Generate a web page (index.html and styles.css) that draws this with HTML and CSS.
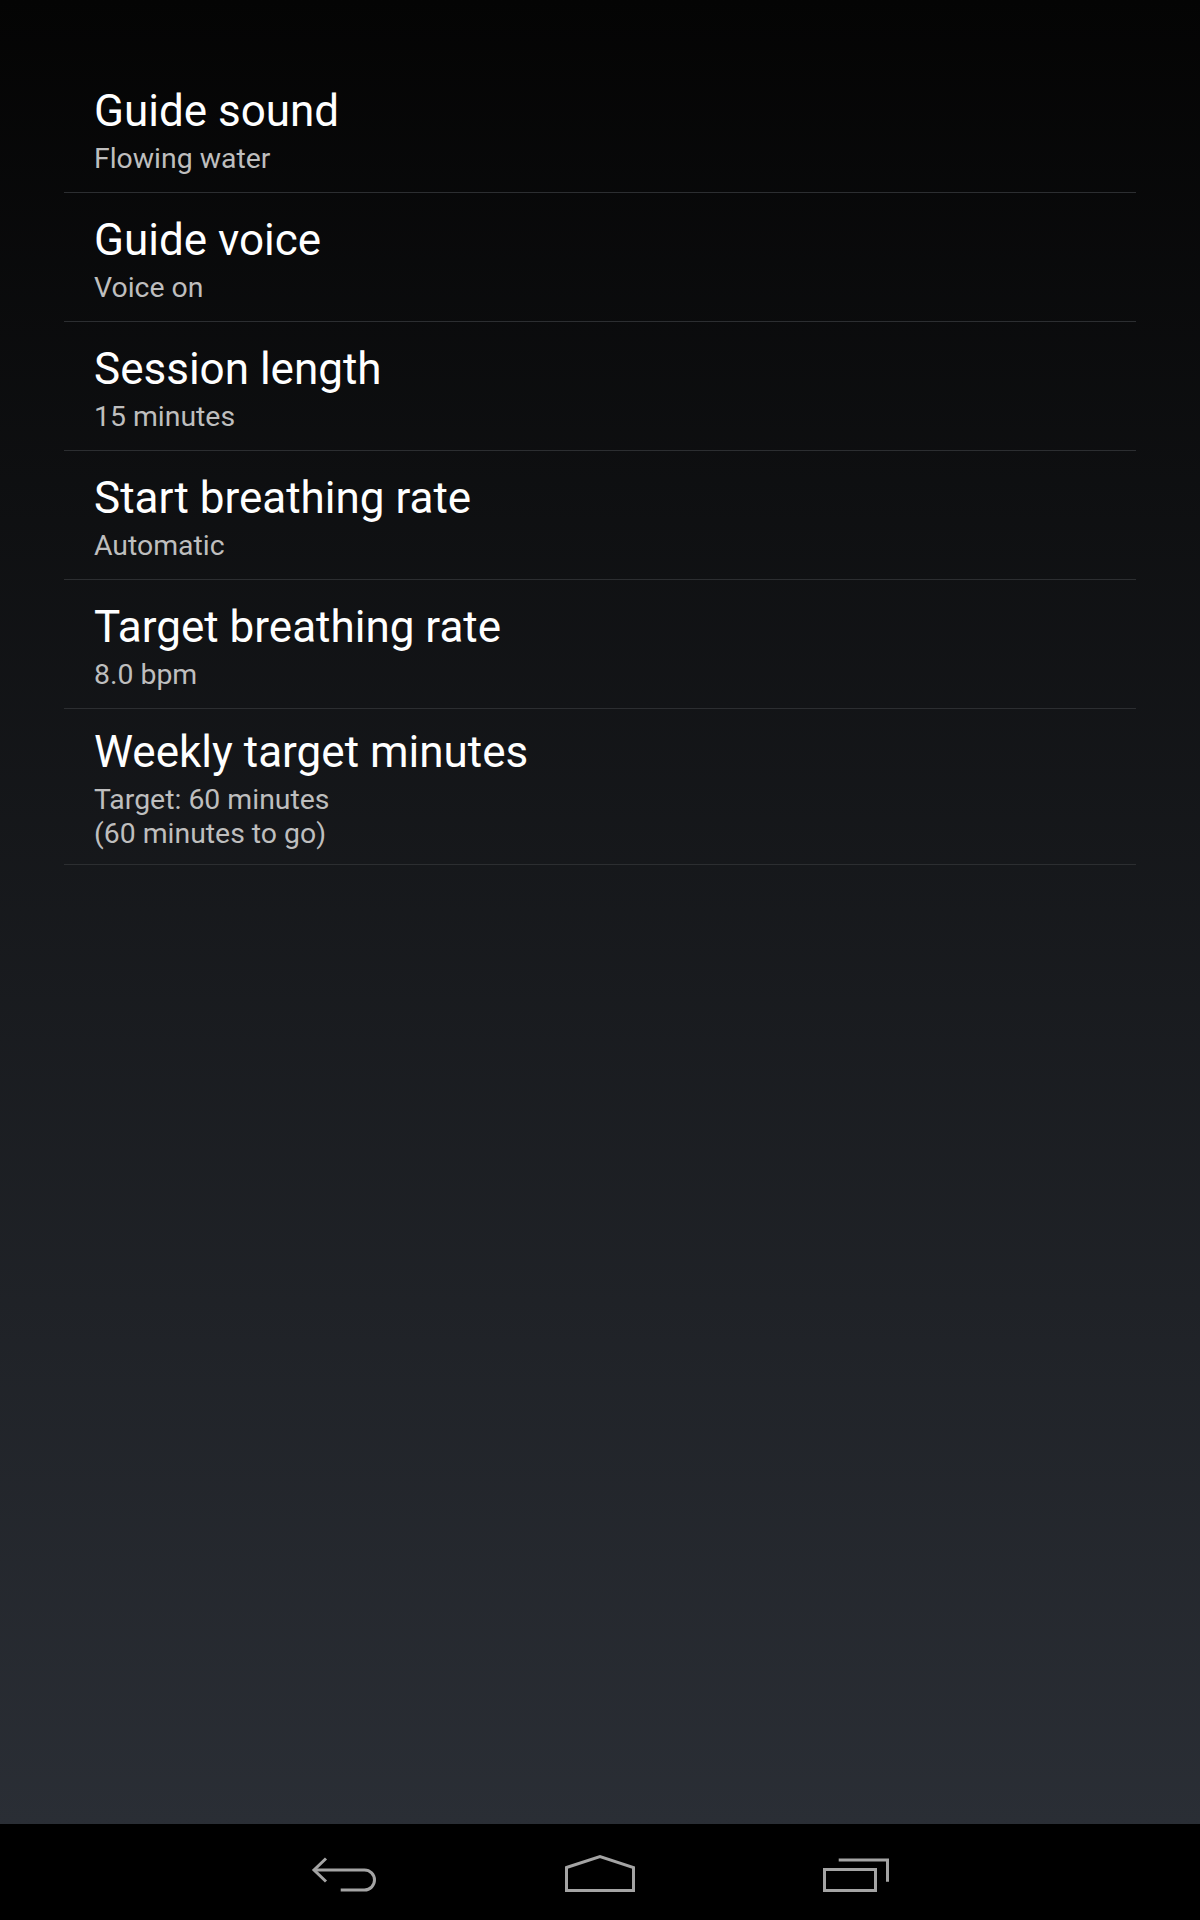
FILE: index.html
```html
<!DOCTYPE html>
<html lang="en">
<head>
<meta charset="UTF-8">
<meta name="viewport" content="width=device-width, initial-scale=1.0">
<title>Settings</title>
<link rel="stylesheet" href="styles.css">
</head>
<body>
  <div class="screen">
    <ul class="prefs">
      <li class="pref">
        <div class="pref-title">Guide sound</div>
        <div class="pref-summary">Flowing water</div>
      </li>
      <li class="pref">
        <div class="pref-title">Guide voice</div>
        <div class="pref-summary">Voice on</div>
      </li>
      <li class="pref">
        <div class="pref-title">Session length</div>
        <div class="pref-summary">15 minutes</div>
      </li>
      <li class="pref">
        <div class="pref-title">Start breathing rate</div>
        <div class="pref-summary">Automatic</div>
      </li>
      <li class="pref">
        <div class="pref-title">Target breathing rate</div>
        <div class="pref-summary">8.0 bpm</div>
      </li>
      <li class="pref">
        <div class="pref-title">Weekly target minutes</div>
        <div class="pref-summary">Target: 60 minutes<br>(60 minutes to go)</div>
      </li>
    </ul>
  </div>

  <nav class="navbar">
    <div class="nav-btn">
      <!-- back -->
      <svg width="80" height="48" viewBox="0 0 80 48">
        <path d="M22 10.5 L10 22 L22 33.5" />
        <path d="M10 22 H60.5 A10 10 0 0 1 60.5 42 H36.7" />
      </svg>
    </div>
    <div class="nav-btn">
      <!-- home -->
      <svg width="80" height="48" viewBox="0 0 80 48">
        <path d="M6.5 19.5 L40 8.5 L73.5 19.5 V42.5 H6.5 Z" />
      </svg>
    </div>
    <div class="nav-btn">
      <!-- recents -->
      <svg width="80" height="48" viewBox="0 0 80 48">
        <rect x="8.5" y="21.5" width="51" height="21" />
        <path d="M22.7 12 H71.5 V33.7" />
      </svg>
    </div>
  </nav>
</body>
</html>
```

FILE: styles.css
```css
html, body {
  margin: 0;
  padding: 0;
}
body {
  width: 1200px;
  height: 1920px;
  background-color: #000;
  font-family: Roboto, "Noto Sans", sans-serif;
  overflow: hidden;
}
.screen {
  height: 1824px;
  box-sizing: border-box;
  padding: 64px 64px 0;
  background: linear-gradient(#040404, #2a2e35);
}
.prefs {
  list-style: none;
  margin: 0;
  padding: 0;
}
.pref {
  display: flex;
  flex-direction: column;
  justify-content: center;
  min-height: 102px;
  padding: 13px 0 13px 30px;
  border-bottom: 1px solid #2c2e31;
}
.pref-title {
  font-size: 44px;
  line-height: 61px;
  color: #fff;
}
.pref-summary {
  font-size: 28.4px;
  line-height: 34px;
  color: #bebebe;
}
.navbar {
  height: 96px;
  background-color: #000;
  display: flex;
  justify-content: center;
  align-items: center;
}
.nav-btn {
  width: 256px;
  height: 96px;
  display: flex;
  justify-content: center;
  align-items: center;
}
.nav-btn svg {
  fill: none;
  stroke: #a4a4a4;
  stroke-width: 3;
}
```
